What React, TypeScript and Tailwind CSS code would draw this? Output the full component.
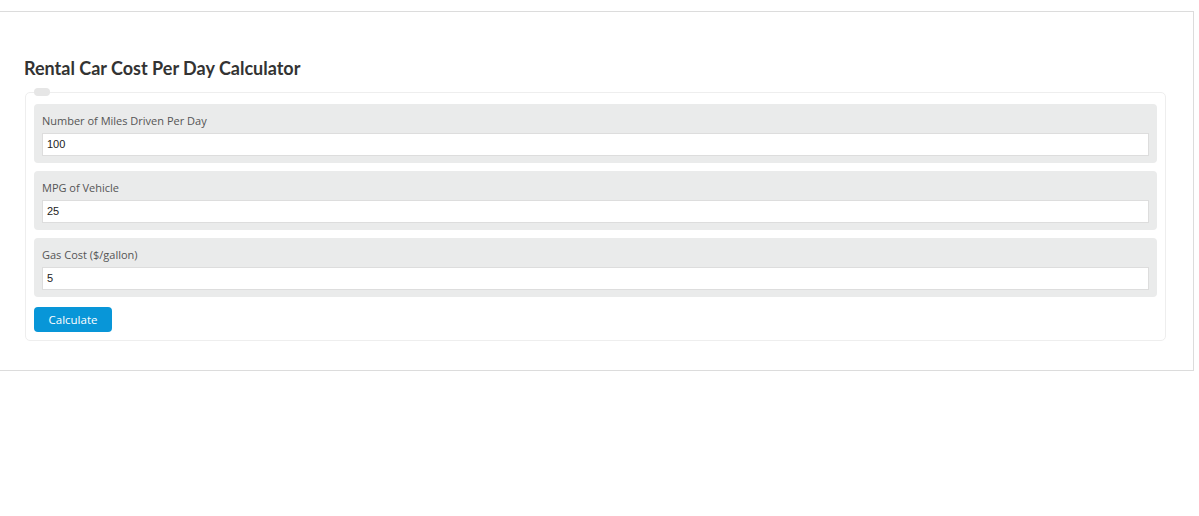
import React from "react";

const fields = [
  { label: "Number of Miles Driven Per Day", value: "100" },
  { label: "MPG of Vehicle", value: "25" },
  { label: "Gas Cost ($/gallon)", value: "5" },
];

export default function App() {
  return (
    <div className="w-[1199px] h-[516px] bg-white pt-[11px]" style={{ fontFamily: '"Open Sans", "Noto Sans", sans-serif' }}>
      <div className="-ml-px w-[1195px] h-[360px] border border-[#dcdcdc] pl-[25px] pt-[44px]">
        <h1
          className="text-[18px] leading-[24px] font-bold text-[#333333] -ml-px"
          style={{ fontFamily: 'Lato, "Open Sans", sans-serif' }}
        >
          Rental Car Cost Per Day Calculator
        </h1>
        <div className="relative mt-[12px] w-[1141px] h-[249px] border border-[#eeeeee] rounded-[5px] px-[8px] pt-[11px]">
          <div className="absolute left-[8px] -top-[5px] w-[16px] h-[8px] rounded-full bg-[#e6e6e6]" />
          <div className="flex flex-col gap-[8px]">
            {fields.map((f) => (
              <div key={f.label} className="h-[59px] bg-[#eaebeb] rounded-[4px] px-[8px] pt-[9px]">
                <div className="text-[11px] leading-[15px] text-[#555555]">{f.label}</div>
                <div
                  className="mt-[5px] h-[23px] bg-white border border-[#dddddd] flex items-center px-[4px] text-[11px] text-[#222222]"
                  style={{ fontFamily: '"Liberation Sans", Arial, sans-serif' }}
                >
                  {f.value}
                </div>
              </div>
            ))}
          </div>
          <button className="mt-[10px] w-[78px] h-[25px] rounded-[4px] bg-[#0896d8] text-white text-[11.5px] flex items-center justify-center">
            Calculate
          </button>
        </div>
      </div>
    </div>
  );
}
